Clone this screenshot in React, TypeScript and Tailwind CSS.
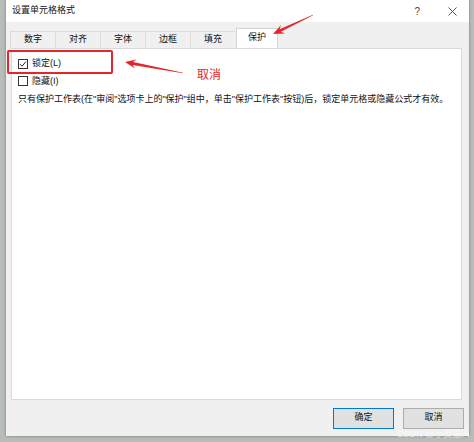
import React from "react";

const FONT = { fontFamily: '"Liberation Sans", "Noto Sans CJK SC", sans-serif' };

type Pt = [number, number];

// Tapered annotation arrow: thin at the tail, widening towards a notched head.
function arrowPoints(tail: Pt, tip: Pt): string {
  const dx = tip[0] - tail[0];
  const dy = tip[1] - tail[1];
  const len = Math.hypot(dx, dy);
  const ux = dx / len;
  const uy = dy / len;
  const nx = -uy;
  const ny = ux;
  const headLen = 11;
  const headHalf = 4.6;
  const bx = tip[0] - ux * headLen;
  const by = tip[1] - uy * headLen;
  const nbx = tip[0] - ux * (headLen - 3);
  const nby = tip[1] - uy * (headLen - 3);
  const pts: Pt[] = [
    [tail[0] + nx * 0.3, tail[1] + ny * 0.3],
    [nbx + nx * 1.4, nby + ny * 1.4],
    [bx + nx * headHalf, by + ny * headHalf],
    tip,
    [bx - nx * headHalf, by - ny * headHalf],
    [nbx - nx * 1.4, nby - ny * 1.4],
    [tail[0] - nx * 0.3, tail[1] - ny * 0.3],
  ];
  return pts.map((p) => `${p[0].toFixed(1)},${p[1].toFixed(1)}`).join(" ");
}

function CheckBox({ checked }: { checked?: boolean }) {
  return (
    <span className="flex h-[10px] w-[10px] shrink-0 items-center justify-center border border-[#333333] bg-white">
      {checked && (
        <svg width="8" height="8" viewBox="0 0 8 8">
          <path d="M1 4.2 L3 6.2 L7 1.6" fill="none" stroke="#222" strokeWidth="1" />
        </svg>
      )}
    </span>
  );
}

const tabs = ["数字", "对齐", "字体", "边框", "填充"];

export default function App() {
  return (
    <div
      className="relative flex h-[442px] w-[474px] overflow-hidden bg-[#b9bdb9] pb-[6px] pl-[6px] pr-[5px] text-[#111111]"
      style={FONT}
    >
      {/* dialog window */}
      <div className="flex flex-1 flex-col bg-[#f0f0f0] shadow-[0_0_3px_rgba(0,0,0,0.35)]">
        {/* title bar */}
        <div className="flex h-[22px] items-center bg-white pl-[6px] pr-[12px] text-[9px]">
          <span>设置单元格格式</span>
          <span className="ml-auto mr-[28px] text-[10px] text-[#444]">?</span>
          <svg width="9" height="9" viewBox="0 0 9 9">
            <path d="M0.5 0.5 L8.5 8.5 M8.5 0.5 L0.5 8.5" stroke="#444" strokeWidth="0.9" />
          </svg>
        </div>

        {/* tab strip */}
        <div className="flex h-[26px] items-end pl-[4px] text-[9px]">
          {tabs.map((t) => (
            <div
              key={t}
              className="flex h-[17px] w-[45px] items-center justify-center border-l border-t border-[#dcdcdc]"
            >
              {t}
            </div>
          ))}
          <div className="-mb-px ml-px flex h-[21px] w-[42px] items-center justify-center border border-b-0 border-[#d3d3d3] bg-white pb-[2px]">
            保护
          </div>
        </div>

        {/* tab page */}
        <div className="ml-[5px] mr-[7px] flex h-[352px] flex-col border border-[#d9d9d9] bg-white pl-[6px] pt-[8px] text-[9px]">
          <div className="flex items-center gap-[4px]">
            <CheckBox checked />
            <span>锁定(L)</span>
          </div>
          <div className="mt-[4px] flex items-center gap-[4px]">
            <CheckBox />
            <span>隐藏(I)</span>
          </div>
          <p className="mt-[5px] whitespace-nowrap">
            只有保护工作表(在"审阅"选项卡上的"保护"组中，单击"保护工作表"按钮)后，锁定单元格或隐藏公式才有效。
          </p>
        </div>

        {/* buttons */}
        <div className="flex flex-1 items-center justify-end gap-[9px] pr-[5px] text-[9px]">
          <button className="h-[21px] w-[61px] border border-[#0078d7] bg-[#e1e1e1]" style={FONT}>
            确定
          </button>
          <button className="h-[21px] w-[61px] border border-[#adadad] bg-[#e1e1e1]" style={FONT}>
            取消
          </button>
        </div>
      </div>

      {/* annotation: highlight box, arrows and label */}
      <div className="pointer-events-none absolute left-[7px] top-[50px] h-[24px] w-[106px] rounded-[2px] border-2 border-[#e3262b]" />
      <svg className="pointer-events-none absolute left-0 top-0" width="474" height="442">
        <polygon points={arrowPoints([313, 15], [273, 34])} fill="#e3262b" />
        <polygon points={arrowPoints([183, 73], [125, 62])} fill="#e3262b" />
      </svg>
      <span className="absolute left-[197px] top-[66px] text-[12px] text-[#e3262b]">取消</span>

      {/* watermark */}
      <span className="absolute left-[397px] top-[428px] text-[9px] text-white/70">CSDN @小灵猫人</span>
    </div>
  );
}
